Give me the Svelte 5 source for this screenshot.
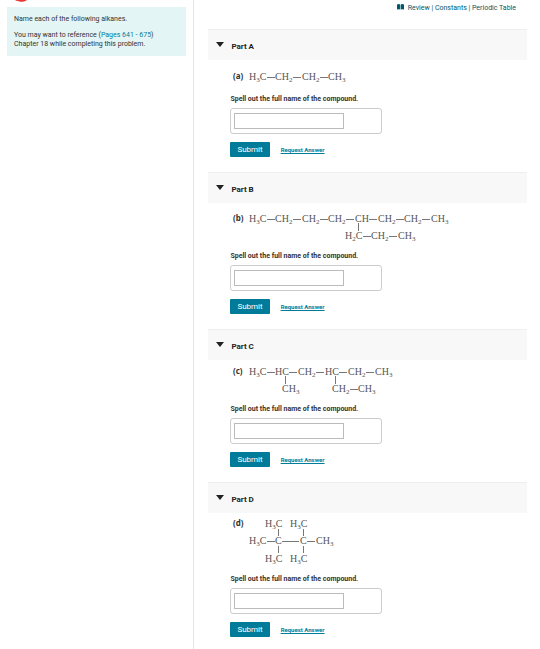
<script lang="ts">
  type Atom = { x: number; y: number; f: string }
  type Bond = [number, number, number, number]
  type Part = {
    id: string
    height: number
    baseline: number
    atoms: Atom[]
    bonds: Bond[]
  }

  const parts: Part[] = [
    {
      id: 'A',
      height: 32,
      baseline: 20,
      atoms: [
        { x: 19, y: 20, f: 'H3C' },
        { x: 45, y: 20, f: 'CH2' },
        { x: 72, y: 20, f: 'CH2' },
        { x: 98, y: 20, f: 'CH3' },
      ],
      bonds: [[37, 17, 45, 17], [63, 17, 71, 17], [90, 17, 98, 17]],
    },
    {
      id: 'B',
      height: 46,
      baseline: 19,
      atoms: [
        { x: 19, y: 19, f: 'H3C' },
        { x: 45, y: 19, f: 'CH2' },
        { x: 72, y: 19, f: 'CH2' },
        { x: 98, y: 19, f: 'CH2' },
        { x: 125, y: 19, f: 'CH' },
        { x: 148, y: 19, f: 'CH2' },
        { x: 174, y: 19, f: 'CH2' },
        { x: 201, y: 19, f: 'CH3' },
        { x: 115, y: 36, f: 'H2C' },
        { x: 141, y: 36, f: 'CH2' },
        { x: 168, y: 36, f: 'CH3' },
      ],
      bonds: [
        [37, 16, 45, 16], [63, 16, 71, 16], [90, 16, 98, 16], [116, 16, 124, 16],
        [139, 16, 147, 16], [166, 16, 174, 16], [192, 16, 200, 16],
        [128, 20, 128, 28], [133, 33, 141, 33], [159, 33, 167, 33],
      ],
    },
    {
      id: 'C',
      height: 42,
      baseline: 15,
      atoms: [
        { x: 19, y: 15, f: 'H3C' },
        { x: 45, y: 15, f: 'HC' },
        { x: 68, y: 15, f: 'CH2' },
        { x: 95, y: 15, f: 'HC' },
        { x: 118, y: 15, f: 'CH2' },
        { x: 145, y: 15, f: 'CH3' },
        { x: 52, y: 32, f: 'CH3' },
        { x: 102, y: 32, f: 'CH2' },
        { x: 128, y: 32, f: 'CH3' },
      ],
      bonds: [
        [37, 12, 45, 12], [59, 12, 67, 12], [86, 12, 94, 12], [109, 12, 117, 12],
        [136, 12, 144, 12], [55, 16, 55, 24], [105, 16, 105, 24], [120, 29, 128, 29],
      ],
    },
    {
      id: 'D',
      height: 59,
      baseline: 14,
      atoms: [
        { x: 35, y: 14, f: 'H3C' },
        { x: 60, y: 14, f: 'H3C' },
        { x: 19, y: 31, f: 'H3C' },
        { x: 45, y: 31, f: 'C' },
        { x: 70, y: 31, f: 'C' },
        { x: 86, y: 31, f: 'CH3' },
        { x: 35, y: 49, f: 'H3C' },
        { x: 60, y: 49, f: 'H3C' },
      ],
      bonds: [
        [37, 28, 45, 28], [52, 28, 69, 28], [77, 28, 85, 28],
        [48, 16, 48, 23], [73, 16, 73, 23], [48, 33, 48, 40], [73, 33, 73, 40],
      ],
    },
  ]

  let answers: Record<string, string> = $state({ A: '', B: '', C: '', D: '' })
  let open: Record<string, boolean> = $state({ A: true, B: true, C: true, D: true })
</script>

<div class="page">
  <aside>
    <svg class="mark" width="14" height="2" viewBox="0 0 14 2" aria-hidden="true">
      <path d="M0 0H12Q10 2 7 1.8Q4 2 3 1Q1 1 0 0Z" fill="#e53935" />
    </svg>
    <div class="intro">
      <p>Name each of the following alkanes.</p>
      <p>
        <span>You may want to reference (</span><a href="#pages">Pages 641 - 675</a><span>)</span><br />
        <span>Chapter 18 while completing this problem.</span>
      </p>
    </div>
  </aside>

  <main>
    <nav>
      <svg width="7" height="6" viewBox="0 0 14 12" aria-hidden="true">
        <path d="M0 1Q4-1 6.4 1V11Q4 9.5 0 11ZM14 1Q10-1 7.6 1V11Q10 9.5 14 11Z" fill="#00596b" />
      </svg>
      <a href="#review">Review</a> | <a href="#constants">Constants</a> | <a href="#table">Periodic Table</a>
    </nav>

    {#each parts as part}
      <section>
        <h2>
          <button type="button" class="toggle" aria-expanded={open[part.id]} onclick={() => (open[part.id] = !open[part.id])}>
            <svg width="8" height="5" viewBox="0 0 8 5" aria-hidden="true"><path d="M0 0H8L4 5Z" fill="#222" /></svg>
            <span>Part {part.id}</span>
          </button>
        </h2>

        {#if open[part.id]}
          <form onsubmit={(e) => e.preventDefault()}>
            <svg class="formula" width="240" height={part.height}>
              <text class="letter" x="3" y={part.baseline - 1}>({part.id.toLowerCase()})</text>
              {#each part.atoms as atom}
                <text x={atom.x} y={atom.y}>{#each atom.f.split('') as ch, i}{#if /\d/.test(ch)}<tspan class="sub" dy="2">{ch}</tspan>{:else if i > 0 && /\d/.test(atom.f[i - 1])}<tspan dy="-2">{ch}</tspan>{:else}{ch}{/if}{/each}</text>
              {/each}
              {#each part.bonds as [x1, y1, x2, y2]}
                <line {x1} {y1} {x2} {y2} />
              {/each}
            </svg>
            <label for="answer-{part.id}">Spell out the full name of the compound.</label>
            <div class="answer">
              <input id="answer-{part.id}" type="text" autocomplete="off" bind:value={answers[part.id]} />
            </div>
            <div class="actions">
              <button type="submit" class="submit">Submit</button>
              <a href="#answer-{part.id}">Request Answer</a>
            </div>
          </form>
        {/if}
      </section>
    {/each}
  </main>
</div>

<style>
  :global(body) {
    background: #fff;
  }

  .page {
    display: grid;
    grid-template-columns: 36fr 64fr;
    font-family: Roboto, sans-serif;
    font-size: 7px;
    line-height: 9px;
    color: #333;
  }

  aside {
    padding: 0 7px;
    border-right: 1px solid #dde6e8;
  }

  .mark {
    display: block;
    margin: 0 0 5px 8px;
  }

  .intro {
    padding: 8px 7px 7px;
    background: #e4f5f5;
  }

  p {
    margin: 0 0 7px;
  }

  p:last-child {
    margin: 0;
  }

  a {
    color: #007c9a;
    text-decoration: none;
  }

  main {
    min-width: 0;
    padding: 0 13px 12px 14px;
  }

  nav {
    padding: 4px 11px 16px 0;
    text-align: right;
    color: #00596b;
  }

  nav svg {
    margin-right: 2px;
  }

  nav a {
    color: #00596b;
  }

  section {
    margin-bottom: 15px;
  }

  h2 {
    margin: 0;
    border-top: 1px solid #eee;
    background: #f8f8f8;
  }

  .toggle {
    display: flex;
    gap: 7px;
    width: 100%;
    padding: 12px 8px 8px;
    border: 0;
    background: none;
    font: bold 8px/10px Roboto, sans-serif;
    color: #222;
    text-align: left;
    cursor: pointer;
  }

  form {
    padding-left: 22px;
  }

  .formula {
    display: block;
    max-width: 100%;
    font-family: "Liberation Serif", serif;
    font-size: 10px;
    fill: #555;
  }

  .sub {
    font-size: 7px;
  }

  .letter {
    font-family: "Noto Sans", sans-serif;
    font-size: 8px;
    font-weight: bold;
    fill: #333;
  }

  line {
    stroke: #777;
    stroke-width: 1;
    shape-rendering: crispEdges;
  }

  label {
    display: block;
    margin-bottom: 1px;
    font-weight: bold;
    line-height: 15px;
  }

  .answer {
    box-sizing: border-box;
    width: 152px;
    padding: 4px 3px;
    border: 1px solid #ccc;
    border-radius: 3px;
  }

  input {
    box-sizing: border-box;
    display: block;
    width: 110px;
    height: 16px;
    padding: 0 3px;
    border: 1px solid #bbb;
    font: inherit;
  }

  .actions {
    display: flex;
    align-items: center;
    gap: 11px;
    margin-top: 8px;
  }

  .submit {
    padding: 3px 7px;
    border: 0;
    border-radius: 1px;
    background: #007c9a;
    color: #fff;
    font: 8px/9px Roboto, sans-serif;
    cursor: pointer;
  }

  .actions a {
    font-size: 6px;
    font-weight: bold;
    text-decoration: underline;
  }
</style>
